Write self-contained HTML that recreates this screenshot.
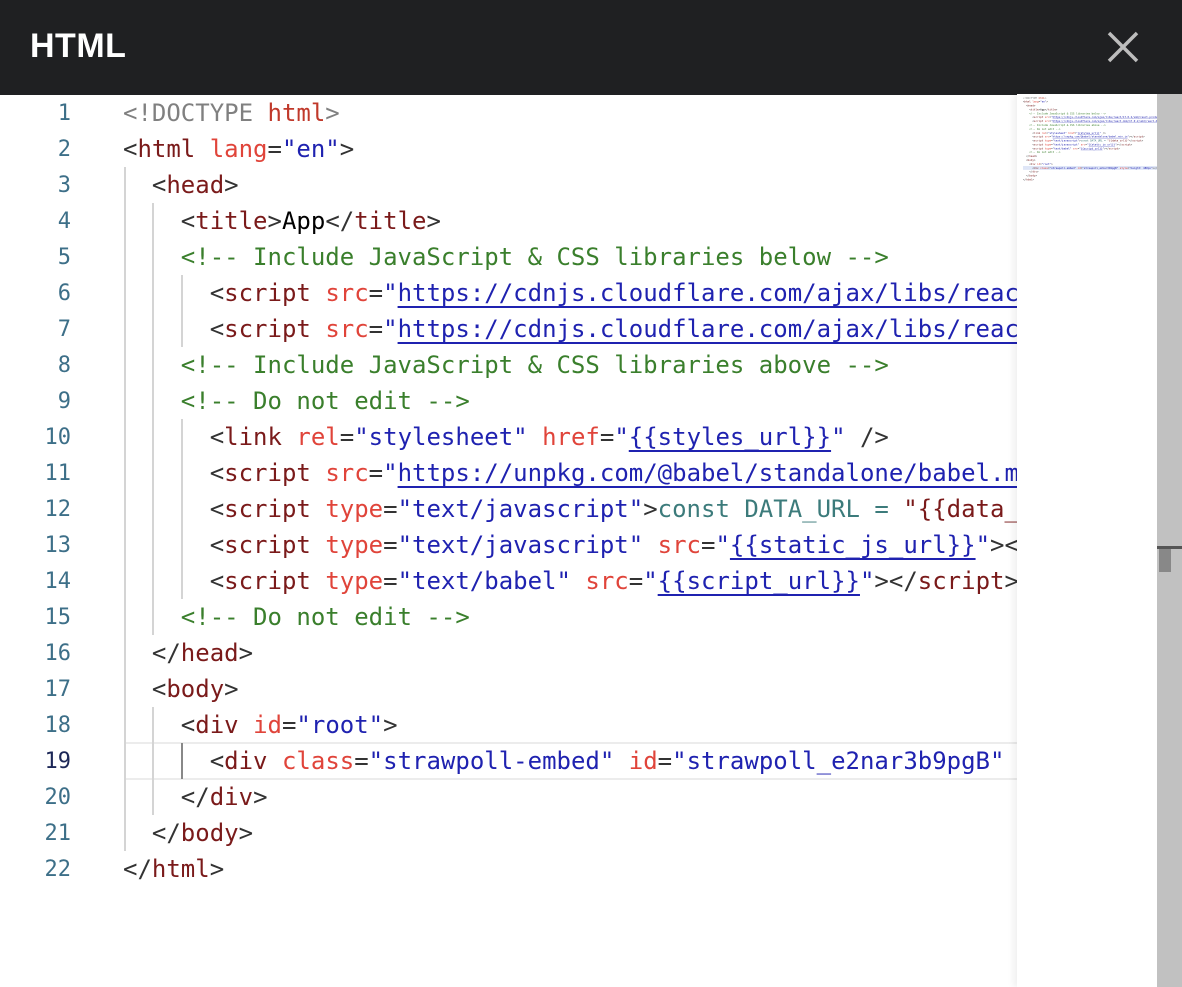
<!DOCTYPE html>
<html><head><style>
body{margin:0;width:1182px;height:987px;overflow:hidden;background:#fff;font-family:"Liberation Sans",sans-serif;position:relative}
.hdr{position:absolute;left:0;top:0;width:1182px;height:95px;background:#1f2022}
.hdr h1{position:absolute;left:30px;top:27px;margin:0;color:#fff;font-size:34px;font-weight:bold;letter-spacing:0.5px}
.code{position:absolute;left:0;top:95px;width:1017px;height:892px;overflow:hidden}
.ln{position:absolute;left:0;width:71px;text-align:right;font-family:"DejaVu Sans Mono",monospace;font-size:22px;color:#3d6f88}
.l{position:absolute;left:123px;white-space:pre;font-family:"DejaVu Sans Mono",monospace;font-size:24px;color:#333;height:36px;line-height:36px}
.t{color:#7a1a1a}.a{color:#e0443a}.s{color:#1f22b0}.c{color:#3a7f2c}.d{color:#808080}.k{color:#3c7b7b}.u{text-decoration:underline;text-decoration-thickness:2px;text-underline-offset:5px}
.g{position:absolute;width:2px;background:#d4d4d4}
.mini{position:absolute;left:1017px;top:94px;width:140px;height:893px;background:#fff;box-shadow:-4px 0 6px rgba(0,0,0,0.06);overflow:hidden}
.mini .in{position:absolute;left:6px;top:2px;transform:scale(0.108);transform-origin:0 0;width:1300px;height:900px}
.mini .l{left:0}
.sb{position:absolute;left:1157px;top:94px;width:25px;height:893px;background:#c1c1c1}
</style></head><body>
<div class="hdr"><h1>HTML</h1>
<svg style="position:absolute;left:1107px;top:31px" width="32" height="32" viewBox="0 0 32 32"><path d="M2 2L30 30M30 2L2 30" stroke="#bdbdbd" stroke-width="3.5" fill="none"/></svg></div>
<div class="code" id="code">
<div style="position:absolute;left:125px;top:647px;width:892px;height:34px;border-top:2px solid #ececec;border-bottom:2px solid #ececec"></div>
<div class="g" style="left:124px;top:72px;height:684px"></div>
<div class="g" style="left:152px;top:108px;height:432px"></div>
<div class="g" style="left:152px;top:612px;height:108px"></div>
<div class="g" style="left:181px;top:180px;height:72px"></div>
<div class="g" style="left:181px;top:324px;height:180px"></div>
<div class="g" style="left:181px;top:648px;height:36px;background:#888"></div>
<div id="lines">
<div class="l" style="top:0"><span class="d">&lt;!DOCTYPE <span class="t" style="color:#c0392b">html</span>&gt;</span></div>
<div class="l" style="top:36px">&lt;<span class="t">html</span> <span class="a">lang</span>=<span class="s">"en"</span>&gt;</div>
<div class="l" style="top:72px">  &lt;<span class="t">head</span>&gt;</div>
<div class="l" style="top:108px">    &lt;<span class="t">title</span>&gt;<span style="color:#000">App</span>&lt;/<span class="t">title</span>&gt;</div>
<div class="l c" style="top:144px">    &lt;!-- Include JavaScript &amp; CSS libraries below --&gt;</div>
<div class="l" style="top:180px">      &lt;<span class="t">script</span> <span class="a">src</span>=<span class="s">"<span class="u">https://cdnjs.cloudflare.com/ajax/libs/react/17.0.2/umd/react.production.min.js</span>"</span>&gt;&lt;/<span class="t">script</span>&gt;</div>
<div class="l" style="top:216px">      &lt;<span class="t">script</span> <span class="a">src</span>=<span class="s">"<span class="u">https://cdnjs.cloudflare.com/ajax/libs/react-dom/17.0.2/umd/react-dom.production.min.js</span>"</span>&gt;&lt;/<span class="t">script</span>&gt;</div>
<div class="l c" style="top:252px">    &lt;!-- Include JavaScript &amp; CSS libraries above --&gt;</div>
<div class="l c" style="top:288px">    &lt;!-- Do not edit --&gt;</div>
<div class="l" style="top:324px">      &lt;<span class="t">link</span> <span class="a">rel</span>=<span class="s">"stylesheet"</span> <span class="a">href</span>=<span class="s">"<span class="u">{{styles_url}}</span>"</span> /&gt;</div>
<div class="l" style="top:360px">      &lt;<span class="t">script</span> <span class="a">src</span>=<span class="s">"<span class="u">https://unpkg.com/@babel/standalone/babel.min.js</span>"</span>&gt;&lt;/<span class="t">script</span>&gt;</div>
<div class="l" style="top:396px">      &lt;<span class="t">script</span> <span class="a">type</span>=<span class="s">"text/javascript"</span>&gt;<span class="k">const DATA_URL = </span><span class="t">"{{data_url}}"</span>&lt;/<span class="t">script</span>&gt;</div>
<div class="l" style="top:432px">      &lt;<span class="t">script</span> <span class="a">type</span>=<span class="s">"text/javascript"</span> <span class="a">src</span>=<span class="s">"<span class="u">{{static_js_url}}</span>"</span>&gt;&lt;/<span class="t">script</span>&gt;</div>
<div class="l" style="top:468px">      &lt;<span class="t">script</span> <span class="a">type</span>=<span class="s">"text/babel"</span> <span class="a">src</span>=<span class="s">"<span class="u">{{script_url}}</span>"</span>&gt;&lt;/<span class="t">script</span>&gt;</div>
<div class="l c" style="top:504px">    &lt;!-- Do not edit --&gt;</div>
<div class="l" style="top:540px">  &lt;/<span class="t">head</span>&gt;</div>
<div class="l" style="top:576px">  &lt;<span class="t">body</span>&gt;</div>
<div class="l" style="top:612px">    &lt;<span class="t">div</span> <span class="a">id</span>=<span class="s">"root"</span>&gt;</div>
<div class="l" style="top:648px">      &lt;<span class="t">div</span> <span class="a">class</span>=<span class="s">"strawpoll-embed"</span> <span class="a">id</span>=<span class="s">"strawpoll_e2nar3b9pgB"</span> <span class="a">style</span>=<span class="s">"height: 480px"</span>&gt;&lt;/<span class="t">div</span>&gt;</div>
<div class="l" style="top:684px">    &lt;/<span class="t">div</span>&gt;</div>
<div class="l" style="top:720px">  &lt;/<span class="t">body</span>&gt;</div>
<div class="l" style="top:756px">&lt;/<span class="t">html</span>&gt;</div>
</div>
</div>
<div id="nums"></div>
<div class="mini"><div class="in" id="mini"></div></div>
<div class="sb"><div style="position:absolute;left:0;top:452px;width:25px;height:3px;background:#555"></div><div style="position:absolute;left:2px;top:455px;width:12px;height:23px;background:#888"></div></div>
<script>
var n=document.getElementById('nums'),h='';
for(var i=1;i<=22;i++){h+='<div class="ln" style="top:'+(95+(i-1)*36+6)+'px;'+(i==19?'color:#1c2757':'')+'">'+i+'</div>';}
n.innerHTML=h;
document.getElementById('mini').innerHTML='<div style="position:absolute;left:0;top:648px;width:1300px;height:36px;background:#dfe6f7"></div>'+document.getElementById('lines').innerHTML;
</script>
</body></html>
